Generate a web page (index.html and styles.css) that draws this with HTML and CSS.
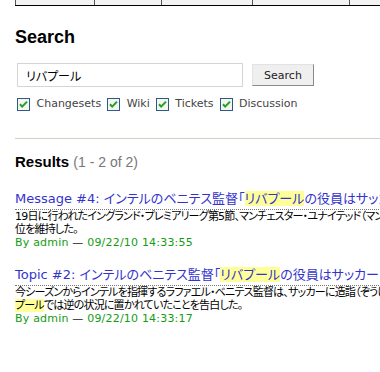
FILE: index.html
```html
<!DOCTYPE html>
<html lang="ja">
<head>
   <meta charset="UTF-8">
   <title>Search</title>
   <link rel="stylesheet" href="styles.css">
</head>
<body>
<div class="page">
   <div class="mainnav">
      <span class="tab" style="width: 78px"></span>
      <span class="tab" style="width: 66px"></span>
      <span class="tab" style="width: 90px"></span>
      <span class="tab" style="width: 96px"></span>
      <span class="tab" style="width: 200px"></span>
   </div>

   <div class="content">
      <h1>Search</h1>

      <form class="search" action="#">
         <div class="query">
            <input class="q" type="text" value="リバプール">
            <button class="submit" type="button">Search</button>
         </div>
         <div class="filters">
            <label class="filter">
               <svg class="cb" width="13" height="13" viewBox="0 0 13 13"><rect x="0.5" y="0.5" width="12" height="12" fill="#f4f4f0" stroke="#2c5a88"/><path d="M3 6.2 L5.2 8.6 L10 3.6" fill="none" stroke="#21a121" stroke-width="2"/></svg>
               Changesets
            </label>
            <label class="filter">
               <svg class="cb" width="13" height="13" viewBox="0 0 13 13"><rect x="0.5" y="0.5" width="12" height="12" fill="#f4f4f0" stroke="#2c5a88"/><path d="M3 6.2 L5.2 8.6 L10 3.6" fill="none" stroke="#21a121" stroke-width="2"/></svg>
               Wiki
            </label>
            <label class="filter">
               <svg class="cb" width="13" height="13" viewBox="0 0 13 13"><rect x="0.5" y="0.5" width="12" height="12" fill="#f4f4f0" stroke="#2c5a88"/><path d="M3 6.2 L5.2 8.6 L10 3.6" fill="none" stroke="#21a121" stroke-width="2"/></svg>
               Tickets
            </label>
            <label class="filter">
               <svg class="cb" width="13" height="13" viewBox="0 0 13 13"><rect x="0.5" y="0.5" width="12" height="12" fill="#f4f4f0" stroke="#2c5a88"/><path d="M3 6.2 L5.2 8.6 L10 3.6" fill="none" stroke="#21a121" stroke-width="2"/></svg>
               Discussion
            </label>
         </div>
      </form>

      <hr>

      <h2>Results <small>(1 - 2 of 2)</small></h2>

      <dl class="results">
         <dt><a href="#">Message #4: インテルのベニテス監督「<span class="hl">リバプール</span>の役員はサッカーを知らなかった」</a></dt>
         <dd>
            <p class="excerpt">19日に行われたイングランド・プレミアリーグ第5節、マンチェスター・ユナイテッド（マンU）はホームでボルトンと引き分けたものの首<br>位を維持した。</p>
            <div class="meta"><span class="author">By admin</span> — <span class="date">09/22/10 14:33:55</span></div>
         </dd>

         <dt><a href="#">Topic #2: インテルのベニテス監督「<span class="hl">リバプール</span>の役員はサッカーを知らなかった」</a></dt>
         <dd>
            <p class="excerpt">今シーズンからインテルを指揮するラファエル・ベニテス監督は、サッカーに造詣（ぞうけい）が深くない役員たちのいた<span class="hl">リバ<br>プール</span>では逆の状況に置かれていたことを告白した。</p>
            <div class="meta"><span class="author">By admin</span> — <span class="date">09/22/10 14:33:17</span></div>
         </dd>
      </dl>
   </div>
</div>
</body>
</html>
```

FILE: styles.css
```css
body {
   margin: 0;
   padding: 0;
   font: 11px "DejaVu Sans", Verdana, "Noto Sans CJK JP", sans-serif;
   color: #000;
   background: #fff;
}

.page {
   width: 100%;
   overflow: hidden;
}

.mainnav {
   display: flex;
   width: 900px;
   height: 5px;
   margin-left: 15px;
   border-bottom: 1px solid #000;
}

.tab {
   display: block;
   height: 5px;
   border-left: 1px solid #555;
   background: #f3f3f3;
   flex-shrink: 0;
}

.content {
   width: 900px;
   padding: 0 15px;
}

h1,
h2 {
   font-family: "Liberation Sans", Arial, sans-serif;
   font-weight: bold;
   margin: 0;
}

h1 {
   font-size: 18px;
   line-height: 22px;
   margin-top: 20px;
}

.search {
   margin: 15px 0 0 2px;
}

.query {
   display: flex;
   align-items: center;
}

.q {
   box-sizing: border-box;
   width: 226px;
   height: 24px;
   margin: 0;
   padding: 0 8px;
   border: 1px solid #d5d5d5;
   font: 12px "Noto Sans CJK JP", sans-serif;
   font-feature-settings: "palt";
   color: #000;
}

.submit {
   box-sizing: border-box;
   width: 62px;
   height: 22px;
   margin: 0 0 0 9px;
   padding: 0;
   border: 1px solid;
   border-color: #e2e2e2 #8a8a8a #8a8a8a #e2e2e2;
   background: #efefef;
   font: 11px "DejaVu Sans", Verdana, sans-serif;
   color: #222;
}

.filters {
   display: flex;
   margin-top: 10px;
   line-height: 14px;
}

.filter {
   color: #444;
   margin-right: 6px;
}

.cb {
   vertical-align: -4px;
   margin-right: 3px;
}

hr {
   height: 0;
   margin: 27px 0 0 0;
   border: 0;
   border-top: 1px solid #d0d0c4;
}

h2 {
   font-size: 15px;
   line-height: 18px;
   margin-top: 14px;
}

h2 small {
   font-size: 14px;
   font-weight: normal;
   color: #777;
}

.results {
   margin: 20px 0 0 0;
}

.results dt {
   font-size: 13px;
   line-height: 16px;
   padding-bottom: 2px;
   border-bottom: 1px dotted #777;
   white-space: nowrap;
   font-feature-settings: "palt";
}

.results dt a {
   color: #3333cc;
   text-decoration: none;
}

.results dd {
   margin: 0 0 18px 0;
}

.excerpt {
   margin: 0;
   font-size: 11px;
   line-height: 13px;
   letter-spacing: -0.8px;
   white-space: nowrap;
   font-feature-settings: "palt";
}

.hl {
   background: #ffff99;
}

.meta {
   font-size: 11px;
   line-height: 13px;
   letter-spacing: 0.2px;
   color: #222;
}

.author,
.date {
   color: #149c14;
}
```
